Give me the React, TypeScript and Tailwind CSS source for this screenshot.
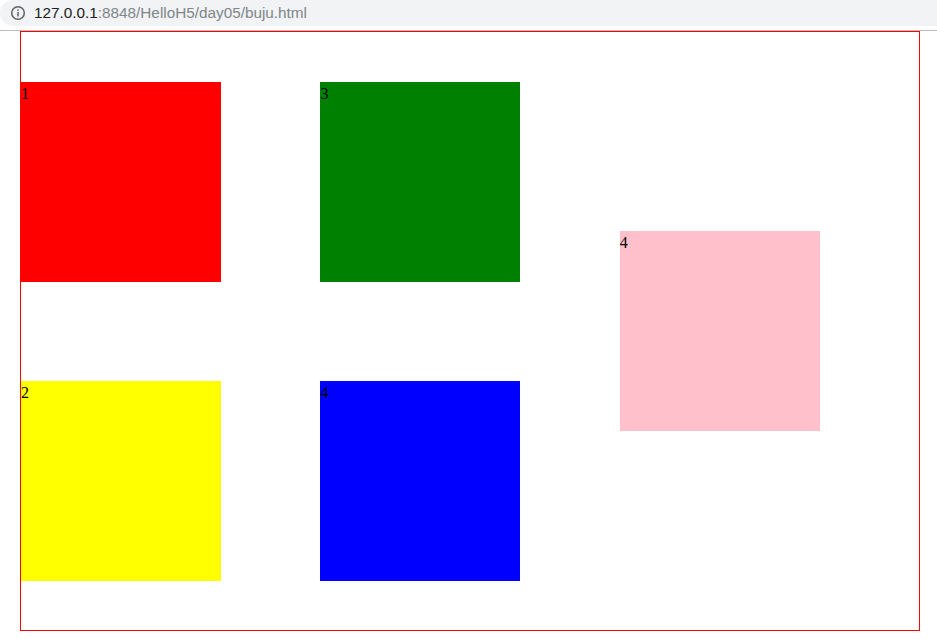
const BOXES = [
  { label: "1", color: "bg-[#ff0000]" },
  { label: "2", color: "bg-[#ffff00]" },
  { label: "3", color: "bg-[#008000]" },
  { label: "4", color: "bg-[#0000ff]" },
  { label: "4", color: "bg-[#ffc0cb]" },
];

function AddressBar() {
  return (
    <div className="h-[31px] w-full bg-white border-b border-[#bdbdbd]">
      <div className="h-[26px] w-full rounded-l-[13px] bg-[#f1f3f4] flex items-center pl-[10px] gap-[8px]">
        <svg width="16" height="16" viewBox="0 0 16 16" fill="none">
          <circle cx="8" cy="8" r="6.3" stroke="#5f6368" strokeWidth="1.5" />
          <rect x="7.25" y="7" width="1.5" height="4.5" fill="#5f6368" />
          <rect x="7.25" y="4.3" width="1.5" height="1.5" fill="#5f6368" />
        </svg>
        <span className="font-['Liberation_Sans',Arial,sans-serif] text-[15.3px] leading-none">
          <span className="text-[#202124]">127.0.0.1</span>
          <span className="text-[#80868b]">:8848/HelloH5/day05/buju.html</span>
        </span>
      </div>
    </div>
  );
}

export default function App() {
  return (
    <div className="w-[937px] h-[639px] bg-white overflow-hidden">
      <AddressBar />
      <div className="ml-[20px] w-[900px] h-[600px] border border-[#ff0000]">
        <div className="h-full flex flex-col flex-wrap justify-center content-start gap-x-[99.4px]">
          {BOXES.map((b, i) => (
            <div
              key={i}
              className={`w-[200px] h-[200px] my-[49.5px] ${b.color} font-['Liberation_Serif','Times_New_Roman',serif] text-[16px] leading-[23px] text-black`}
            >
              {b.label}
            </div>
          ))}
        </div>
      </div>
    </div>
  );
}
